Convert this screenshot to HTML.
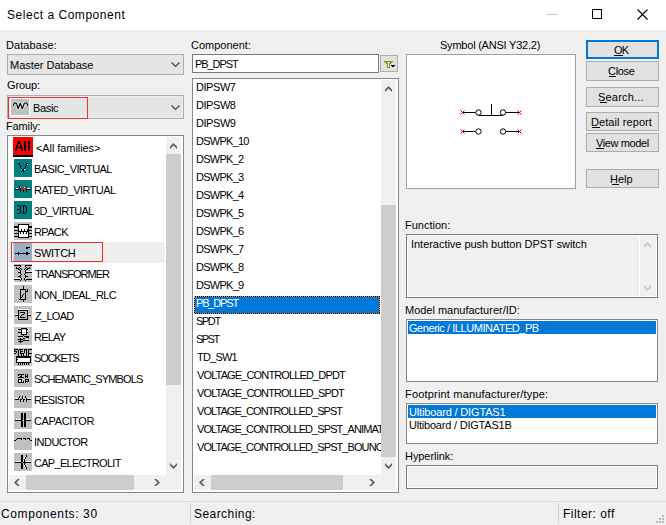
<!DOCTYPE html>
<html><head><meta charset="utf-8"><title>Select a Component</title><style>
html,body{margin:0;padding:0}
body{width:666px;height:525px;overflow:hidden;position:relative;background:#f0f0f0;font-family:"Liberation Sans",sans-serif;}
.a{position:absolute;box-sizing:border-box;}
.t{position:absolute;white-space:pre;font-size:11px;line-height:13px;color:#000;}
.s{font-size:12px;line-height:15px;}
svg{overflow:visible}
</style></head><body>
<div class="a" style="left:0px;top:0px;width:666px;height:30px;background:#fff"></div>
<div class="a" style="left:547px;top:14px;width:11px;height:1px;background:#c8c8c8"></div>
<div class="a" style="left:592px;top:9px;width:10px;height:10px;border:1px solid #000"></div>
<svg class="a" style="left:637px;top:9px;" width="12" height="12" viewBox="0 0 12 12"><path d="M0.5 0.5 L10.5 10.5 M10.5 0.5 L0.5 10.5" stroke="#000" stroke-width="1.1" fill="none"/></svg>
<div class="a" style="left:7px;top:54px;width:177px;height:21px;background:#e5e5e5;border:1px solid #adadad"></div>
<svg class="a" style="left:171px;top:62px;" width="9" height="6" viewBox="0 0 9 6"><path d="M0.5 0.5 L4.5 4.5 L8.5 0.5" stroke="#444" stroke-width="1.2" fill="none"/></svg>
<div class="a" style="left:7px;top:95px;width:177px;height:24px;background:#e5e5e5;border:1px solid #adadad"></div>
<div class="a" style="left:8px;top:96px;width:175px;height:22px;border:1px solid #e6f2f2"></div>
<div class="a" style="left:8px;top:97px;width:80px;height:22px;border:1px solid #f03030"></div>
<div class="a" style="left:10px;top:98px;width:20px;height:18px;background:#fff"></div>
<div class="a" style="left:11px;top:99px;width:18px;height:16px;background:#c0c0c0"></div>
<svg class="a" style="left:11px;top:99px;" width="18" height="16" viewBox="0 0 18 16"><path d="M2 6.8 Q3 3.6 4.5 3.8 Q5.6 3.9 6.1 6 L7.1 9.7 L9.2 4.2 L11.3 9.7 L13.2 4.6 Q14 3.6 15.2 3.8 Q16.4 4.1 17 6.8" stroke="#fff" stroke-width="2.4" fill="none" stroke-linejoin="round"/><path d="M2 6.8 Q3 3.6 4.5 3.8 Q5.6 3.9 6.1 6 L7.1 9.7 L9.2 4.2 L11.3 9.7 L13.2 4.6 Q14 3.6 15.2 3.8 Q16.4 4.1 17 6.8" stroke="#000" stroke-width="1.2" fill="none" stroke-linejoin="round"/></svg>
<svg class="a" style="left:171px;top:105px;" width="9" height="6" viewBox="0 0 9 6"><path d="M0.5 0.5 L4.5 4.5 L8.5 0.5" stroke="#444" stroke-width="1.2" fill="none"/></svg>
<div class="a" style="left:7px;top:135px;width:177px;height:358px;background:#fff;border:1px solid #828790"></div>
<div class="a" style="left:9px;top:242px;width:156px;height:21px;background:#efefef"></div>
<div class="a" style="left:11px;top:242px;width:92px;height:20px;border:1px solid #f03030"></div>
<div class="a" style="left:166px;top:137px;width:15px;height:353px;background:#f0f0f0"></div>
<div class="a" style="left:166px;top:154px;width:15px;height:231px;background:#cdcdcd"></div>
<svg class="a" style="left:170px;top:143px;" width="7" height="6" viewBox="0 0 7 6"><polygon points="0,6 0,3.6 3.5,0 7,3.6 7,6 3.5,2.5" fill="#606060"/></svg>
<svg class="a" style="left:170px;top:463px;" width="7" height="6" viewBox="0 0 7 6"><polygon points="0,0 0,2.4 3.5,6 7,2.4 7,0 3.5,3.5" fill="#606060"/></svg>
<div class="a" style="left:9px;top:475px;width:157px;height:15px;background:#f0f0f0"></div>
<div class="a" style="left:26px;top:475px;width:108px;height:15px;background:#cdcdcd"></div>
<svg class="a" style="left:14px;top:479px;" width="6" height="7" viewBox="0 0 6 7"><polygon points="6,0 3.6,0 0,3.5 3.6,7 6,7 2.5,3.5" fill="#606060"/></svg>
<svg class="a" style="left:154px;top:479px;" width="6" height="7" viewBox="0 0 6 7"><polygon points="0,0 2.4,0 6,3.5 2.4,7 0,7 3.5,3.5" fill="#606060"/></svg>
<svg class="a" style="left:13px;top:137px;shape-rendering:crispEdges" width="20" height="20" viewBox="0 0 20 20"><rect width="20" height="20" fill="#ff0000"/><rect x="5" y="4" width="2" height="1" fill="#000"/><rect x="11" y="4" width="2" height="1" fill="#000"/><rect x="15" y="4" width="2" height="1" fill="#000"/><rect x="5" y="5" width="2" height="1" fill="#000"/><rect x="11" y="5" width="2" height="1" fill="#000"/><rect x="15" y="5" width="2" height="1" fill="#000"/><rect x="4" y="6" width="4" height="1" fill="#000"/><rect x="11" y="6" width="2" height="1" fill="#000"/><rect x="15" y="6" width="2" height="1" fill="#000"/><rect x="4" y="7" width="1" height="1" fill="#000"/><rect x="7" y="7" width="1" height="1" fill="#000"/><rect x="11" y="7" width="2" height="1" fill="#000"/><rect x="15" y="7" width="2" height="1" fill="#000"/><rect x="3" y="8" width="2" height="1" fill="#000"/><rect x="7" y="8" width="2" height="1" fill="#000"/><rect x="11" y="8" width="2" height="1" fill="#000"/><rect x="15" y="8" width="2" height="1" fill="#000"/><rect x="3" y="9" width="2" height="1" fill="#000"/><rect x="7" y="9" width="2" height="1" fill="#000"/><rect x="11" y="9" width="2" height="1" fill="#000"/><rect x="15" y="9" width="2" height="1" fill="#000"/><rect x="3" y="10" width="6" height="1" fill="#000"/><rect x="11" y="10" width="2" height="1" fill="#000"/><rect x="15" y="10" width="2" height="1" fill="#000"/><rect x="2" y="11" width="2" height="1" fill="#000"/><rect x="8" y="11" width="2" height="1" fill="#000"/><rect x="11" y="11" width="2" height="1" fill="#000"/><rect x="15" y="11" width="2" height="1" fill="#000"/><rect x="2" y="12" width="2" height="1" fill="#000"/><rect x="8" y="12" width="2" height="1" fill="#000"/><rect x="11" y="12" width="2" height="1" fill="#000"/><rect x="15" y="12" width="2" height="1" fill="#000"/><rect x="2" y="13" width="2" height="1" fill="#000"/><rect x="8" y="13" width="2" height="1" fill="#000"/><rect x="11" y="13" width="2" height="1" fill="#000"/><rect x="15" y="13" width="2" height="1" fill="#000"/><rect x="0" y="18" width="20" height="1" fill="#000"/><rect x="0" y="19" width="20" height="1" fill="#000"/></svg>
<div class="a" style="left:13px;top:243px;width:1px;height:18px;background:#c4dcf2"></div>
<svg class="a" style="left:14px;top:159px;shape-rendering:crispEdges" width="18" height="18" viewBox="0 0 18 18"><rect width="18" height="18" fill="#008080"/><rect x="4" y="4" width="2" height="1" fill="#000"/><rect x="12" y="4" width="2" height="1" fill="#000"/><rect x="5" y="5" width="1" height="1" fill="#000"/><rect x="12" y="5" width="1" height="1" fill="#000"/><rect x="13" y="5" width="1" height="1" fill="#fff"/><rect x="6" y="6" width="1" height="1" fill="#000"/><rect x="12" y="6" width="1" height="1" fill="#000"/><rect x="6" y="7" width="1" height="1" fill="#000"/><rect x="11" y="7" width="1" height="1" fill="#000"/><rect x="6" y="8" width="1" height="1" fill="#000"/><rect x="11" y="8" width="1" height="1" fill="#000"/><rect x="7" y="9" width="1" height="1" fill="#000"/><rect x="10" y="9" width="1" height="1" fill="#000"/><rect x="7" y="10" width="1" height="1" fill="#fff"/><rect x="8" y="10" width="2" height="1" fill="#000"/><rect x="10" y="10" width="1" height="1" fill="#fff"/><rect x="8" y="11" width="2" height="1" fill="#000"/><rect x="9" y="12" width="1" height="1" fill="#000"/></svg>
<svg class="a" style="left:14px;top:180px;shape-rendering:crispEdges" width="18" height="18" viewBox="0 0 18 18"><rect width="18" height="18" fill="#008080"/><rect x="5" y="6" width="1" height="1" fill="#000"/><rect x="7" y="6" width="1" height="1" fill="#f00"/><rect x="11" y="6" width="1" height="1" fill="#f00"/><rect x="5" y="7" width="1" height="1" fill="#000"/><rect x="6" y="7" width="1" height="1" fill="#fff"/><rect x="7" y="7" width="1" height="1" fill="#f00"/><rect x="10" y="7" width="1" height="1" fill="#fff"/><rect x="11" y="7" width="1" height="1" fill="#f00"/><rect x="2" y="8" width="2" height="1" fill="#fff"/><rect x="6" y="8" width="1" height="1" fill="#000"/><rect x="7" y="8" width="4" height="1" fill="#f00"/><rect x="12" y="8" width="1" height="1" fill="#000"/><rect x="13" y="8" width="3" height="1" fill="#fff"/><rect x="1" y="9" width="4" height="1" fill="#000"/><rect x="6" y="9" width="1" height="1" fill="#000"/><rect x="8" y="9" width="2" height="1" fill="#f00"/><rect x="12" y="9" width="5" height="1" fill="#000"/><rect x="6" y="10" width="1" height="1" fill="#000"/><rect x="9" y="10" width="1" height="1" fill="#000"/><rect x="12" y="10" width="1" height="1" fill="#000"/><rect x="6" y="11" width="1" height="1" fill="#000"/><rect x="9" y="11" width="1" height="1" fill="#000"/><rect x="12" y="11" width="1" height="1" fill="#000"/></svg>
<svg class="a" style="left:14px;top:201px;shape-rendering:crispEdges" width="18" height="18" viewBox="0 0 18 18"><rect width="18" height="18" fill="#008080"/><rect x="3" y="4" width="3" height="1" fill="#000"/><rect x="8" y="4" width="3" height="1" fill="#000"/><rect x="6" y="5" width="1" height="1" fill="#000"/><rect x="9" y="5" width="1" height="1" fill="#000"/><rect x="11" y="5" width="1" height="1" fill="#000"/><rect x="6" y="6" width="1" height="1" fill="#000"/><rect x="9" y="6" width="1" height="1" fill="#000"/><rect x="12" y="6" width="1" height="1" fill="#000"/><rect x="6" y="7" width="1" height="1" fill="#000"/><rect x="9" y="7" width="1" height="1" fill="#000"/><rect x="12" y="7" width="1" height="1" fill="#000"/><rect x="3" y="8" width="3" height="1" fill="#000"/><rect x="9" y="8" width="1" height="1" fill="#000"/><rect x="12" y="8" width="1" height="1" fill="#000"/><rect x="6" y="9" width="1" height="1" fill="#000"/><rect x="9" y="9" width="1" height="1" fill="#000"/><rect x="12" y="9" width="1" height="1" fill="#000"/><rect x="6" y="10" width="1" height="1" fill="#000"/><rect x="9" y="10" width="1" height="1" fill="#000"/><rect x="12" y="10" width="1" height="1" fill="#000"/><rect x="6" y="11" width="1" height="1" fill="#000"/><rect x="9" y="11" width="1" height="1" fill="#000"/><rect x="11" y="11" width="1" height="1" fill="#000"/><rect x="3" y="12" width="3" height="1" fill="#000"/><rect x="8" y="12" width="3" height="1" fill="#000"/></svg>
<svg class="a" style="left:14px;top:222px;shape-rendering:crispEdges" width="18" height="18" viewBox="0 0 18 18"><rect width="18" height="18" fill="#c0c0c0"/><rect x="4" y="2" width="11" height="1" fill="#000"/><rect x="4" y="3" width="1" height="1" fill="#000"/><rect x="5" y="3" width="9" height="1" fill="#fff"/><rect x="14" y="3" width="1" height="1" fill="#000"/><rect x="0" y="4" width="5" height="1" fill="#000"/><rect x="5" y="4" width="9" height="1" fill="#fff"/><rect x="14" y="4" width="4" height="1" fill="#000"/><rect x="0" y="5" width="5" height="1" fill="#000"/><rect x="5" y="5" width="9" height="1" fill="#fff"/><rect x="14" y="5" width="4" height="1" fill="#000"/><rect x="4" y="6" width="1" height="1" fill="#000"/><rect x="5" y="6" width="9" height="1" fill="#fff"/><rect x="14" y="6" width="1" height="1" fill="#000"/><rect x="4" y="7" width="1" height="1" fill="#000"/><rect x="5" y="7" width="2" height="1" fill="#fff"/><rect x="7" y="7" width="1" height="1" fill="#000"/><rect x="8" y="7" width="2" height="1" fill="#fff"/><rect x="10" y="7" width="1" height="1" fill="#000"/><rect x="11" y="7" width="2" height="1" fill="#fff"/><rect x="13" y="7" width="2" height="1" fill="#000"/><rect x="0" y="8" width="5" height="1" fill="#000"/><rect x="5" y="8" width="2" height="1" fill="#fff"/><rect x="7" y="8" width="1" height="1" fill="#000"/><rect x="8" y="8" width="2" height="1" fill="#fff"/><rect x="10" y="8" width="1" height="1" fill="#000"/><rect x="11" y="8" width="2" height="1" fill="#fff"/><rect x="13" y="8" width="5" height="1" fill="#000"/><rect x="4" y="9" width="11" height="1" fill="#000"/><rect x="4" y="10" width="1" height="1" fill="#000"/><rect x="5" y="10" width="1" height="1" fill="#fff"/><rect x="6" y="10" width="1" height="1" fill="#000"/><rect x="7" y="10" width="2" height="1" fill="#fff"/><rect x="9" y="10" width="1" height="1" fill="#000"/><rect x="10" y="10" width="2" height="1" fill="#fff"/><rect x="12" y="10" width="1" height="1" fill="#000"/><rect x="13" y="10" width="1" height="1" fill="#fff"/><rect x="14" y="10" width="1" height="1" fill="#000"/><rect x="0" y="11" width="5" height="1" fill="#000"/><rect x="5" y="11" width="1" height="1" fill="#fff"/><rect x="6" y="11" width="1" height="1" fill="#000"/><rect x="7" y="11" width="2" height="1" fill="#fff"/><rect x="9" y="11" width="1" height="1" fill="#000"/><rect x="10" y="11" width="2" height="1" fill="#fff"/><rect x="12" y="11" width="1" height="1" fill="#000"/><rect x="13" y="11" width="1" height="1" fill="#fff"/><rect x="14" y="11" width="4" height="1" fill="#000"/><rect x="4" y="12" width="1" height="1" fill="#000"/><rect x="5" y="12" width="9" height="1" fill="#fff"/><rect x="14" y="12" width="1" height="1" fill="#000"/><rect x="4" y="13" width="1" height="1" fill="#000"/><rect x="5" y="13" width="9" height="1" fill="#fff"/><rect x="14" y="13" width="1" height="1" fill="#000"/><rect x="0" y="14" width="5" height="1" fill="#000"/><rect x="5" y="14" width="9" height="1" fill="#fff"/><rect x="14" y="14" width="4" height="1" fill="#000"/><rect x="4" y="15" width="11" height="1" fill="#000"/></svg>
<svg class="a" style="left:14px;top:243px;shape-rendering:crispEdges" width="18" height="18" viewBox="0 0 18 18"><rect width="18" height="18" fill="#98afc6"/><rect x="12" y="4" width="4" height="1" fill="#000"/><rect x="12" y="5" width="2" height="1" fill="#000"/><rect x="4" y="9" width="1" height="1" fill="#000"/><rect x="12" y="9" width="2" height="1" fill="#000"/><rect x="1" y="10" width="15" height="1" fill="#000"/><rect x="4" y="11" width="1" height="1" fill="#000"/><rect x="12" y="11" width="2" height="1" fill="#000"/></svg>
<svg class="a" style="left:14px;top:264px;shape-rendering:crispEdges" width="18" height="18" viewBox="0 0 18 18"><rect width="18" height="18" fill="#c0c0c0"/><rect x="0" y="1" width="7" height="1" fill="#000"/><rect x="11" y="1" width="7" height="1" fill="#000"/><rect x="6" y="2" width="1" height="1" fill="#000"/><rect x="8" y="2" width="2" height="1" fill="#fff"/><rect x="11" y="2" width="1" height="1" fill="#000"/><rect x="2" y="3" width="1" height="1" fill="#000"/><rect x="5" y="3" width="1" height="1" fill="#000"/><rect x="12" y="3" width="1" height="1" fill="#000"/><rect x="15" y="3" width="1" height="1" fill="#000"/><rect x="2" y="4" width="3" height="1" fill="#000"/><rect x="6" y="4" width="1" height="1" fill="#000"/><rect x="11" y="4" width="1" height="1" fill="#000"/><rect x="13" y="4" width="3" height="1" fill="#000"/><rect x="4" y="5" width="2" height="1" fill="#000"/><rect x="7" y="5" width="1" height="1" fill="#000"/><rect x="10" y="5" width="1" height="1" fill="#000"/><rect x="12" y="5" width="2" height="1" fill="#000"/><rect x="6" y="6" width="1" height="1" fill="#000"/><rect x="11" y="6" width="1" height="1" fill="#000"/><rect x="5" y="7" width="1" height="1" fill="#fff"/><rect x="6" y="7" width="1" height="1" fill="#000"/><rect x="11" y="7" width="1" height="1" fill="#000"/><rect x="12" y="7" width="6" height="1" fill="#fff"/><rect x="4" y="8" width="3" height="1" fill="#000"/><rect x="11" y="8" width="7" height="1" fill="#000"/><rect x="6" y="9" width="1" height="1" fill="#000"/><rect x="11" y="9" width="1" height="1" fill="#000"/><rect x="7" y="10" width="1" height="1" fill="#000"/><rect x="10" y="10" width="1" height="1" fill="#000"/><rect x="6" y="11" width="1" height="1" fill="#000"/><rect x="11" y="11" width="1" height="1" fill="#000"/><rect x="4" y="12" width="3" height="1" fill="#000"/><rect x="11" y="12" width="3" height="1" fill="#000"/><rect x="6" y="13" width="1" height="1" fill="#000"/><rect x="11" y="13" width="1" height="1" fill="#000"/><rect x="0" y="14" width="6" height="1" fill="#fff"/><rect x="7" y="14" width="1" height="1" fill="#000"/><rect x="10" y="14" width="1" height="1" fill="#000"/><rect x="0" y="15" width="6" height="1" fill="#000"/><rect x="7" y="15" width="1" height="1" fill="#000"/><rect x="10" y="15" width="1" height="1" fill="#000"/><rect x="12" y="15" width="6" height="1" fill="#000"/><rect x="6" y="16" width="1" height="1" fill="#000"/><rect x="11" y="16" width="1" height="1" fill="#000"/></svg>
<svg class="a" style="left:14px;top:285px;shape-rendering:crispEdges" width="18" height="18" viewBox="0 0 18 18"><rect width="18" height="18" fill="#c0c0c0"/><rect x="9" y="1" width="1" height="1" fill="#000"/><rect x="9" y="2" width="1" height="1" fill="#000"/><rect x="9" y="3" width="1" height="1" fill="#000"/><rect x="6" y="4" width="6" height="1" fill="#000"/><rect x="13" y="4" width="1" height="1" fill="#000"/><rect x="6" y="5" width="1" height="1" fill="#000"/><rect x="11" y="5" width="1" height="1" fill="#000"/><rect x="13" y="5" width="1" height="1" fill="#000"/><rect x="6" y="6" width="1" height="1" fill="#000"/><rect x="11" y="6" width="3" height="1" fill="#000"/><rect x="6" y="7" width="1" height="1" fill="#000"/><rect x="11" y="7" width="1" height="1" fill="#000"/><rect x="6" y="8" width="1" height="1" fill="#000"/><rect x="11" y="8" width="1" height="1" fill="#000"/><rect x="6" y="9" width="1" height="1" fill="#000"/><rect x="9" y="9" width="1" height="1" fill="#000"/><rect x="11" y="9" width="1" height="1" fill="#000"/><rect x="6" y="10" width="1" height="1" fill="#000"/><rect x="8" y="10" width="1" height="1" fill="#000"/><rect x="11" y="10" width="1" height="1" fill="#000"/><rect x="6" y="11" width="1" height="1" fill="#000"/><rect x="8" y="11" width="1" height="1" fill="#000"/><rect x="11" y="11" width="1" height="1" fill="#000"/><rect x="6" y="12" width="2" height="1" fill="#000"/><rect x="11" y="12" width="1" height="1" fill="#000"/><rect x="6" y="13" width="1" height="1" fill="#000"/><rect x="11" y="13" width="1" height="1" fill="#000"/><rect x="5" y="14" width="7" height="1" fill="#000"/><rect x="9" y="15" width="1" height="1" fill="#000"/><rect x="9" y="16" width="1" height="1" fill="#000"/></svg>
<svg class="a" style="left:14px;top:306px;shape-rendering:crispEdges" width="18" height="18" viewBox="0 0 18 18"><rect width="18" height="18" fill="#c0c0c0"/><rect x="4" y="3" width="10" height="1" fill="#fff"/><rect x="4" y="4" width="10" height="1" fill="#000"/><rect x="4" y="5" width="1" height="1" fill="#000"/><rect x="13" y="5" width="1" height="1" fill="#000"/><rect x="4" y="6" width="1" height="1" fill="#000"/><rect x="6" y="6" width="5" height="1" fill="#000"/><rect x="13" y="6" width="1" height="1" fill="#000"/><rect x="4" y="7" width="1" height="1" fill="#000"/><rect x="10" y="7" width="1" height="1" fill="#000"/><rect x="13" y="7" width="1" height="1" fill="#000"/><rect x="1" y="8" width="3" height="1" fill="#fff"/><rect x="4" y="8" width="1" height="1" fill="#000"/><rect x="8" y="8" width="2" height="1" fill="#000"/><rect x="13" y="8" width="1" height="1" fill="#000"/><rect x="14" y="8" width="3" height="1" fill="#fff"/><rect x="1" y="9" width="4" height="1" fill="#000"/><rect x="7" y="9" width="1" height="1" fill="#000"/><rect x="13" y="9" width="4" height="1" fill="#000"/><rect x="4" y="10" width="1" height="1" fill="#000"/><rect x="6" y="10" width="1" height="1" fill="#000"/><rect x="13" y="10" width="1" height="1" fill="#000"/><rect x="4" y="11" width="1" height="1" fill="#000"/><rect x="6" y="11" width="5" height="1" fill="#000"/><rect x="13" y="11" width="1" height="1" fill="#000"/><rect x="4" y="12" width="1" height="1" fill="#000"/><rect x="13" y="12" width="1" height="1" fill="#000"/><rect x="4" y="13" width="10" height="1" fill="#000"/></svg>
<svg class="a" style="left:14px;top:327px;shape-rendering:crispEdges" width="18" height="18" viewBox="0 0 18 18"><rect width="18" height="18" fill="#c0c0c0"/><rect x="7" y="1" width="6" height="1" fill="#000"/><rect x="3" y="2" width="1" height="1" fill="#fff"/><rect x="4" y="2" width="4" height="1" fill="#000"/><rect x="12" y="2" width="2" height="1" fill="#000"/><rect x="14" y="2" width="1" height="1" fill="#fff"/><rect x="7" y="3" width="1" height="1" fill="#000"/><rect x="8" y="3" width="4" height="1" fill="#fff"/><rect x="12" y="3" width="1" height="1" fill="#000"/><rect x="7" y="4" width="1" height="1" fill="#000"/><rect x="8" y="4" width="4" height="1" fill="#fff"/><rect x="12" y="4" width="1" height="1" fill="#000"/><rect x="13" y="4" width="1" height="1" fill="#fff"/><rect x="4" y="5" width="4" height="1" fill="#000"/><rect x="12" y="5" width="2" height="1" fill="#000"/><rect x="7" y="6" width="1" height="1" fill="#000"/><rect x="8" y="6" width="4" height="1" fill="#fff"/><rect x="12" y="6" width="1" height="1" fill="#000"/><rect x="7" y="7" width="6" height="1" fill="#000"/><rect x="9" y="8" width="1" height="1" fill="#000"/><rect x="4" y="9" width="5" height="1" fill="#000"/><rect x="10" y="9" width="5" height="1" fill="#000"/><rect x="12" y="10" width="3" height="1" fill="#000"/><rect x="6" y="11" width="1" height="1" fill="#000"/><rect x="9" y="11" width="2" height="1" fill="#000"/><rect x="4" y="12" width="5" height="1" fill="#000"/><rect x="12" y="12" width="1" height="1" fill="#fff"/><rect x="6" y="13" width="1" height="1" fill="#000"/><rect x="9" y="13" width="6" height="1" fill="#000"/><rect x="3" y="14" width="1" height="1" fill="#fff"/><rect x="4" y="14" width="5" height="1" fill="#000"/><rect x="6" y="15" width="1" height="1" fill="#000"/></svg>
<svg class="a" style="left:14px;top:348px;shape-rendering:crispEdges" width="18" height="18" viewBox="0 0 18 18"><rect width="18" height="18" fill="#c0c0c0"/><rect x="0" y="1" width="4" height="1" fill="#000"/><rect x="5" y="1" width="4" height="1" fill="#000"/><rect x="10" y="1" width="3" height="1" fill="#000"/><rect x="14" y="1" width="4" height="1" fill="#000"/><rect x="0" y="2" width="1" height="1" fill="#000"/><rect x="4" y="2" width="1" height="1" fill="#000"/><rect x="6" y="2" width="1" height="1" fill="#000"/><rect x="10" y="2" width="1" height="1" fill="#000"/><rect x="12" y="2" width="1" height="1" fill="#000"/><rect x="14" y="2" width="1" height="1" fill="#000"/><rect x="0" y="3" width="3" height="1" fill="#000"/><rect x="4" y="3" width="1" height="1" fill="#000"/><rect x="6" y="3" width="3" height="1" fill="#000"/><rect x="10" y="3" width="1" height="1" fill="#000"/><rect x="12" y="3" width="1" height="1" fill="#000"/><rect x="14" y="3" width="1" height="1" fill="#000"/><rect x="2" y="4" width="1" height="1" fill="#000"/><rect x="4" y="4" width="1" height="1" fill="#000"/><rect x="6" y="4" width="1" height="1" fill="#000"/><rect x="10" y="4" width="1" height="1" fill="#000"/><rect x="12" y="4" width="1" height="1" fill="#000"/><rect x="14" y="4" width="1" height="1" fill="#000"/><rect x="0" y="5" width="2" height="1" fill="#000"/><rect x="4" y="5" width="1" height="1" fill="#000"/><rect x="6" y="5" width="4" height="1" fill="#000"/><rect x="12" y="5" width="1" height="1" fill="#000"/><rect x="14" y="5" width="4" height="1" fill="#000"/><rect x="4" y="6" width="1" height="1" fill="#000"/><rect x="7" y="6" width="1" height="1" fill="#000"/><rect x="9" y="6" width="1" height="1" fill="#000"/><rect x="12" y="6" width="1" height="1" fill="#000"/><rect x="14" y="6" width="1" height="1" fill="#000"/><rect x="4" y="7" width="1" height="1" fill="#000"/><rect x="7" y="7" width="1" height="1" fill="#000"/><rect x="9" y="7" width="1" height="1" fill="#000"/><rect x="12" y="7" width="1" height="1" fill="#000"/><rect x="14" y="7" width="1" height="1" fill="#000"/><rect x="2" y="8" width="15" height="1" fill="#000"/><rect x="2" y="9" width="15" height="1" fill="#000"/><rect x="2" y="10" width="1" height="1" fill="#000"/><rect x="3" y="10" width="13" height="1" fill="#fff"/><rect x="16" y="10" width="1" height="1" fill="#000"/><rect x="2" y="11" width="2" height="1" fill="#000"/><rect x="4" y="11" width="12" height="1" fill="#fff"/><rect x="16" y="11" width="1" height="1" fill="#000"/><rect x="2" y="12" width="1" height="1" fill="#000"/><rect x="3" y="12" width="13" height="1" fill="#fff"/><rect x="16" y="12" width="1" height="1" fill="#000"/><rect x="2" y="13" width="1" height="1" fill="#000"/><rect x="3" y="13" width="13" height="1" fill="#fff"/><rect x="16" y="13" width="1" height="1" fill="#000"/><rect x="2" y="14" width="15" height="1" fill="#000"/><rect x="4" y="15" width="1" height="1" fill="#000"/><rect x="6" y="15" width="1" height="1" fill="#000"/><rect x="8" y="15" width="1" height="1" fill="#000"/><rect x="10" y="15" width="1" height="1" fill="#000"/><rect x="12" y="15" width="1" height="1" fill="#000"/><rect x="14" y="15" width="1" height="1" fill="#000"/><rect x="4" y="16" width="1" height="1" fill="#000"/><rect x="6" y="16" width="1" height="1" fill="#000"/><rect x="8" y="16" width="1" height="1" fill="#000"/><rect x="10" y="16" width="1" height="1" fill="#000"/><rect x="12" y="16" width="1" height="1" fill="#000"/><rect x="14" y="16" width="1" height="1" fill="#000"/></svg>
<svg class="a" style="left:14px;top:369px;shape-rendering:crispEdges" width="18" height="18" viewBox="0 0 18 18"><rect width="18" height="18" fill="#c0c0c0"/><rect x="4" y="5" width="6" height="1" fill="#000"/><rect x="11" y="5" width="1" height="1" fill="#000"/><rect x="13" y="5" width="1" height="1" fill="#000"/><rect x="4" y="6" width="1" height="1" fill="#000"/><rect x="7" y="6" width="1" height="1" fill="#000"/><rect x="11" y="6" width="1" height="1" fill="#000"/><rect x="13" y="6" width="1" height="1" fill="#000"/><rect x="6" y="7" width="2" height="1" fill="#000"/><rect x="11" y="7" width="3" height="1" fill="#000"/><rect x="4" y="8" width="6" height="1" fill="#000"/><rect x="11" y="8" width="1" height="1" fill="#000"/><rect x="13" y="8" width="1" height="1" fill="#000"/><rect x="4" y="10" width="4" height="1" fill="#000"/><rect x="11" y="10" width="4" height="1" fill="#000"/><rect x="4" y="11" width="1" height="1" fill="#000"/><rect x="5" y="11" width="2" height="1" fill="#fff"/><rect x="7" y="11" width="1" height="1" fill="#000"/><rect x="11" y="11" width="1" height="1" fill="#000"/><rect x="14" y="11" width="1" height="1" fill="#000"/><rect x="4" y="12" width="1" height="1" fill="#000"/><rect x="5" y="12" width="2" height="1" fill="#fff"/><rect x="7" y="12" width="1" height="1" fill="#000"/><rect x="8" y="12" width="1" height="1" fill="#fff"/><rect x="9" y="12" width="1" height="1" fill="#000"/><rect x="11" y="12" width="4" height="1" fill="#000"/><rect x="4" y="13" width="6" height="1" fill="#000"/><rect x="11" y="13" width="1" height="1" fill="#000"/></svg>
<svg class="a" style="left:14px;top:390px;shape-rendering:crispEdges" width="18" height="18" viewBox="0 0 18 18"><rect width="18" height="18" fill="#c0c0c0"/><rect x="5" y="6" width="1" height="1" fill="#000"/><rect x="8" y="6" width="1" height="1" fill="#000"/><rect x="11" y="6" width="1" height="1" fill="#000"/><rect x="5" y="7" width="1" height="1" fill="#000"/><rect x="6" y="7" width="1" height="1" fill="#fff"/><rect x="8" y="7" width="1" height="1" fill="#000"/><rect x="9" y="7" width="1" height="1" fill="#fff"/><rect x="11" y="7" width="1" height="1" fill="#000"/><rect x="1" y="8" width="3" height="1" fill="#fff"/><rect x="4" y="8" width="1" height="1" fill="#000"/><rect x="8" y="8" width="1" height="1" fill="#000"/><rect x="12" y="8" width="1" height="1" fill="#000"/><rect x="13" y="8" width="4" height="1" fill="#fff"/><rect x="1" y="9" width="4" height="1" fill="#000"/><rect x="6" y="9" width="2" height="1" fill="#000"/><rect x="9" y="9" width="2" height="1" fill="#000"/><rect x="12" y="9" width="5" height="1" fill="#000"/><rect x="6" y="10" width="1" height="1" fill="#000"/><rect x="9" y="10" width="1" height="1" fill="#000"/><rect x="12" y="10" width="1" height="1" fill="#000"/><rect x="6" y="11" width="1" height="1" fill="#000"/><rect x="9" y="11" width="1" height="1" fill="#000"/><rect x="12" y="11" width="1" height="1" fill="#000"/></svg>
<svg class="a" style="left:14px;top:411px;shape-rendering:crispEdges" width="18" height="18" viewBox="0 0 18 18"><rect width="18" height="18" fill="#c0c0c0"/><rect x="7" y="2" width="2" height="1" fill="#000"/><rect x="10" y="2" width="2" height="1" fill="#000"/><rect x="7" y="3" width="2" height="1" fill="#000"/><rect x="10" y="3" width="2" height="1" fill="#000"/><rect x="7" y="4" width="2" height="1" fill="#000"/><rect x="10" y="4" width="2" height="1" fill="#000"/><rect x="7" y="5" width="2" height="1" fill="#000"/><rect x="10" y="5" width="2" height="1" fill="#000"/><rect x="7" y="6" width="2" height="1" fill="#000"/><rect x="10" y="6" width="2" height="1" fill="#000"/><rect x="7" y="7" width="2" height="1" fill="#000"/><rect x="10" y="7" width="2" height="1" fill="#000"/><rect x="2" y="8" width="4" height="1" fill="#fff"/><rect x="7" y="8" width="2" height="1" fill="#000"/><rect x="10" y="8" width="2" height="1" fill="#000"/><rect x="12" y="8" width="4" height="1" fill="#fff"/><rect x="1" y="9" width="7" height="1" fill="#000"/><rect x="10" y="9" width="7" height="1" fill="#000"/><rect x="7" y="10" width="2" height="1" fill="#000"/><rect x="10" y="10" width="2" height="1" fill="#000"/><rect x="7" y="11" width="2" height="1" fill="#000"/><rect x="10" y="11" width="2" height="1" fill="#000"/><rect x="7" y="12" width="2" height="1" fill="#000"/><rect x="10" y="12" width="2" height="1" fill="#000"/><rect x="7" y="13" width="2" height="1" fill="#000"/><rect x="10" y="13" width="2" height="1" fill="#000"/><rect x="7" y="14" width="2" height="1" fill="#000"/><rect x="10" y="14" width="2" height="1" fill="#000"/><rect x="7" y="15" width="2" height="1" fill="#000"/><rect x="10" y="15" width="2" height="1" fill="#000"/></svg>
<svg class="a" style="left:14px;top:432px;shape-rendering:crispEdges" width="18" height="18" viewBox="0 0 18 18"><rect width="18" height="18" fill="#c0c0c0"/><rect x="3" y="6" width="5" height="1" fill="#000"/><rect x="9" y="6" width="3" height="1" fill="#000"/><rect x="13" y="6" width="3" height="1" fill="#000"/><rect x="2" y="7" width="1" height="1" fill="#000"/><rect x="7" y="7" width="1" height="1" fill="#000"/><rect x="11" y="7" width="1" height="1" fill="#000"/><rect x="15" y="7" width="1" height="1" fill="#000"/><rect x="0" y="8" width="2" height="1" fill="#000"/><rect x="16" y="8" width="2" height="1" fill="#000"/></svg>
<svg class="a" style="left:14px;top:453px;shape-rendering:crispEdges" width="18" height="18" viewBox="0 0 18 18"><rect width="18" height="18" fill="#c0c0c0"/><rect x="7" y="2" width="2" height="1" fill="#000"/><rect x="12" y="2" width="1" height="1" fill="#000"/><rect x="7" y="3" width="2" height="1" fill="#000"/><rect x="11" y="3" width="1" height="1" fill="#fff"/><rect x="12" y="3" width="1" height="1" fill="#000"/><rect x="7" y="4" width="2" height="1" fill="#000"/><rect x="10" y="4" width="1" height="1" fill="#fff"/><rect x="11" y="4" width="1" height="1" fill="#000"/><rect x="7" y="5" width="2" height="1" fill="#000"/><rect x="10" y="5" width="1" height="1" fill="#fff"/><rect x="11" y="5" width="1" height="1" fill="#000"/><rect x="7" y="6" width="2" height="1" fill="#000"/><rect x="10" y="6" width="1" height="1" fill="#000"/><rect x="11" y="6" width="1" height="1" fill="#fff"/><rect x="7" y="7" width="2" height="1" fill="#000"/><rect x="9" y="7" width="1" height="1" fill="#fff"/><rect x="10" y="7" width="1" height="1" fill="#000"/><rect x="2" y="8" width="5" height="1" fill="#fff"/><rect x="7" y="8" width="2" height="1" fill="#000"/><rect x="10" y="8" width="1" height="1" fill="#000"/><rect x="12" y="8" width="5" height="1" fill="#fff"/><rect x="1" y="9" width="7" height="1" fill="#000"/><rect x="9" y="9" width="8" height="1" fill="#000"/><rect x="7" y="10" width="2" height="1" fill="#000"/><rect x="10" y="10" width="1" height="1" fill="#000"/><rect x="7" y="11" width="2" height="1" fill="#000"/><rect x="10" y="11" width="1" height="1" fill="#000"/><rect x="7" y="12" width="2" height="1" fill="#000"/><rect x="10" y="12" width="1" height="1" fill="#fff"/><rect x="11" y="12" width="1" height="1" fill="#000"/><rect x="7" y="13" width="2" height="1" fill="#000"/><rect x="10" y="13" width="1" height="1" fill="#fff"/><rect x="11" y="13" width="1" height="1" fill="#000"/><rect x="7" y="14" width="2" height="1" fill="#000"/><rect x="11" y="14" width="1" height="1" fill="#fff"/><rect x="12" y="14" width="1" height="1" fill="#000"/><rect x="7" y="15" width="2" height="1" fill="#000"/><rect x="12" y="15" width="1" height="1" fill="#000"/></svg>
<div class="a" style="left:192px;top:54px;width:187px;height:19px;background:#fff;border:1px solid #7a7a7a"></div>
<div class="a" style="left:380px;top:55px;width:18px;height:17px;background:#e1e1e1;border:1px solid #adadad"></div>
<svg class="a" style="left:381px;top:56px;shape-rendering:crispEdges" width="16" height="15"><rect x="3" y="5" width="9" height="1" fill="#8a8a00"/><rect x="4" y="6" width="2" height="1" fill="#8a8a00"/><rect x="6" y="6" width="3" height="1" fill="#fff"/><rect x="9" y="6" width="2" height="1" fill="#8a8a00"/><rect x="5" y="7" width="2" height="1" fill="#8a8a00"/><rect x="7" y="7" width="1" height="1" fill="#fff"/><rect x="8" y="7" width="2" height="1" fill="#8a8a00"/><rect x="6" y="8" width="1" height="1" fill="#8a8a00"/><rect x="7" y="8" width="1" height="1" fill="#fff"/><rect x="8" y="8" width="1" height="1" fill="#8a8a00"/><rect x="6" y="9" width="1" height="1" fill="#8a8a00"/><rect x="7" y="9" width="1" height="1" fill="#fff"/><rect x="8" y="9" width="1" height="1" fill="#8a8a00"/><rect x="10" y="9" width="4" height="1" fill="#000"/><rect x="6" y="10" width="1" height="1" fill="#8a8a00"/><rect x="7" y="10" width="1" height="1" fill="#fff"/><rect x="8" y="10" width="1" height="1" fill="#8a8a00"/><rect x="11" y="10" width="2" height="1" fill="#000"/><rect x="6" y="11" width="3" height="1" fill="#8a8a00"/></svg>
<div class="a" style="left:192px;top:78px;width:207px;height:415px;background:#fff;border:1px solid #828790"></div>
<div class="a" style="left:381px;top:80px;width:15px;height:410px;background:#f0f0f0"></div>
<div class="a" style="left:381px;top:205px;width:15px;height:252px;background:#cdcdcd"></div>
<svg class="a" style="left:385px;top:86px;" width="7" height="6" viewBox="0 0 7 6"><polygon points="0,6 0,3.6 3.5,0 7,3.6 7,6 3.5,2.5" fill="#606060"/></svg>
<svg class="a" style="left:385px;top:463px;" width="7" height="6" viewBox="0 0 7 6"><polygon points="0,0 0,2.4 3.5,6 7,2.4 7,0 3.5,3.5" fill="#606060"/></svg>
<div class="a" style="left:194px;top:475px;width:187px;height:15px;background:#f0f0f0"></div>
<div class="a" style="left:211px;top:475px;width:132px;height:15px;background:#cdcdcd"></div>
<svg class="a" style="left:199px;top:479px;" width="6" height="7" viewBox="0 0 6 7"><polygon points="6,0 3.6,0 0,3.5 3.6,7 6,7 2.5,3.5" fill="#606060"/></svg>
<svg class="a" style="left:369px;top:479px;" width="6" height="7" viewBox="0 0 6 7"><polygon points="0,0 2.4,0 6,3.5 2.4,7 0,7 3.5,3.5" fill="#606060"/></svg>
<div class="a" style="left:194px;top:296px;width:186px;height:18px;background:#0078d7"></div>
<svg class="a" style="left:194px;top:296px;shape-rendering:crispEdges" width="186" height="18" viewBox="0 0 186 18"><rect x="0.5" y="0.5" width="185" height="17" fill="none" stroke="#ff8728" stroke-width="1"/><rect x="0.5" y="0.5" width="185" height="17" fill="none" stroke="#000" stroke-width="1" stroke-dasharray="1 1"/></svg>
<div class="a" style="left:406px;top:54px;width:170px;height:135px;background:#fff;border:1px solid #a0a0a0"></div>
<svg class="a" style="left:0;top:0" width="666" height="525"><g stroke="#000" stroke-width="1" fill="none" shape-rendering="geometricPrecision">
<path d="M463 112.5 H475.5 M506 112.5 H519 M478.5 115.5 H502.5 M491.5 104 V115.5 M463 131.5 H475.5 M506 131.5 H519"/>
<circle cx="478.5" cy="112.5" r="2.7" fill="#fff"/><circle cx="503" cy="112.5" r="2.7" fill="#fff"/>
<circle cx="478.5" cy="131.5" r="2.7" fill="#fff"/><circle cx="503" cy="131.5" r="2.7" fill="#fff"/>
</g><g stroke="#e00000" stroke-width="1" fill="none">
<path d="M460.5 110.5 L464.5 114.5 M464.5 110.5 L460.5 114.5 M517.5 110.5 L521.5 114.5 M521.5 110.5 L517.5 114.5 M460.5 129.5 L464.5 133.5 M464.5 129.5 L460.5 133.5 M517.5 129.5 L521.5 133.5 M521.5 129.5 L517.5 133.5"/></g></svg>
<div class="a" style="left:586px;top:40px;width:73px;height:19px;background:#e1e1e1;border:2px solid #0078d7"></div>
<div class="a" style="left:586px;top:61px;width:73px;height:20px;background:#e1e1e1;border:1px solid #adadad"></div>
<div class="a" style="left:586px;top:87px;width:73px;height:20px;background:#e1e1e1;border:1px solid #adadad"></div>
<div class="a" style="left:586px;top:112px;width:73px;height:19px;background:#e1e1e1;border:1px solid #adadad"></div>
<div class="a" style="left:586px;top:133px;width:73px;height:19px;background:#e1e1e1;border:1px solid #adadad"></div>
<div class="a" style="left:586px;top:169px;width:73px;height:19px;background:#e1e1e1;border:1px solid #adadad"></div>
<div class="a" style="left:614px;top:55px;width:9px;height:1px;background:#000"></div>
<div class="a" style="left:609px;top:76px;width:7px;height:1px;background:#000"></div>
<div class="a" style="left:600px;top:102px;width:7px;height:1px;background:#000"></div>
<div class="a" style="left:592px;top:127px;width:8px;height:1px;background:#000"></div>
<div class="a" style="left:596px;top:148px;width:8px;height:1px;background:#000"></div>
<div class="a" style="left:612px;top:184px;width:7px;height:1px;background:#000"></div>
<div class="a" style="left:406px;top:234px;width:252px;height:64px;background:#f0f0f0;border:1px solid #7a7a7a"></div>
<div class="a" style="left:407px;top:235px;width:250px;height:62px;border:1px solid #fff"></div>
<div class="a" style="left:639px;top:235px;width:1px;height:62px;background:#fff"></div>
<svg class="a" style="left:644px;top:242px;" width="7" height="6" viewBox="0 0 7 6"><polygon points="0,6 0,3.6 3.5,0 7,3.6 7,6 3.5,2.5" fill="#c8c8c8"/></svg>
<svg class="a" style="left:644px;top:285px;" width="7" height="6" viewBox="0 0 7 6"><polygon points="0,0 0,2.4 3.5,6 7,2.4 7,0 3.5,3.5" fill="#c8c8c8"/></svg>
<div class="a" style="left:406px;top:319px;width:252px;height:63px;background:#fff;border:1px solid #828790"></div>
<div class="a" style="left:408px;top:321px;width:248px;height:13px;background:#0078d7"></div>
<div class="a" style="left:406px;top:403px;width:252px;height:41px;background:#fff;border:1px solid #828790"></div>
<div class="a" style="left:408px;top:405px;width:248px;height:13px;background:#0078d7"></div>
<div class="a" style="left:406px;top:465px;width:252px;height:24px;background:#f0f0f0;border:1px solid #7a7a7a"></div>
<div class="a" style="left:407px;top:466px;width:250px;height:22px;border:1px solid #fff"></div>
<div class="a" style="left:0px;top:501px;width:666px;height:1px;background:#dadada"></div>
<div class="a" style="left:190px;top:503px;width:1px;height:21px;background:#d0d0d0"></div>
<div class="a" style="left:558px;top:503px;width:1px;height:21px;background:#d0d0d0"></div>
<div class="a" style="left:662px;top:521px;width:2px;height:2px;background:#b8b8b8"></div>
<div class="a" style="left:659px;top:521px;width:2px;height:2px;background:#b8b8b8"></div>
<div class="a" style="left:656px;top:521px;width:2px;height:2px;background:#b8b8b8"></div>
<div class="a" style="left:662px;top:518px;width:2px;height:2px;background:#b8b8b8"></div>
<div class="a" style="left:659px;top:518px;width:2px;height:2px;background:#b8b8b8"></div>
<div class="a" style="left:662px;top:515px;width:2px;height:2px;background:#b8b8b8"></div>
<div class="t s" style="left:7px;top:8px;letter-spacing:0.529px">Select a Component</div>
<div class="t" style="left:6px;top:39px;letter-spacing:0.075px">Database:</div>
<div class="t" style="left:10px;top:59px;letter-spacing:-0.029px">Master Database</div>
<div class="t" style="left:7px;top:79px;letter-spacing:-0.120px">Group:</div>
<div class="t" style="left:33px;top:102px;letter-spacing:-0.350px">Basic</div>
<div class="t" style="left:6px;top:120px;letter-spacing:-0.133px">Family:</div>
<div class="t" style="left:191px;top:39px;letter-spacing:0.000px">Component:</div>
<div class="t" style="left:195px;top:58px;letter-spacing:-1.067px">PB_DPST</div>
<div class="t" style="left:440px;top:39px;letter-spacing:-0.222px">Symbol (ANSI Y32.2)</div>
<div class="t" style="left:614px;top:44px;letter-spacing:-0.800px">OK</div>
<div class="t" style="left:608px;top:65px;letter-spacing:-0.300px">Close</div>
<div class="t" style="left:598px;top:91px;letter-spacing:0.200px">Search...</div>
<div class="t" style="left:591px;top:116px;letter-spacing:0.083px">Detail report</div>
<div class="t" style="left:596px;top:137px;letter-spacing:-0.378px">View model</div>
<div class="t" style="left:610px;top:173px;letter-spacing:0.000px">Help</div>
<div class="t" style="left:405px;top:219px;letter-spacing:0.000px">Function:</div>
<div class="t" style="left:411px;top:238px;letter-spacing:-0.035px">Interactive push button DPST switch</div>
<div class="t" style="left:405px;top:304px;letter-spacing:-0.010px">Model manufacturer/ID:</div>
<div class="t" style="left:409px;top:322px;letter-spacing:-0.443px;color:#fff">Generic / ILLUMINATED_PB</div>
<div class="t" style="left:405px;top:388px;letter-spacing:0.185px">Footprint manufacturer/type:</div>
<div class="t" style="left:409px;top:406px;letter-spacing:-0.156px;color:#fff">Ultiboard / DIGTAS1</div>
<div class="t" style="left:409px;top:419px;letter-spacing:-0.211px">Ultiboard / DIGTAS1B</div>
<div class="t" style="left:405px;top:450px;letter-spacing:-0.067px">Hyperlink:</div>
<div class="t s" style="left:1px;top:507px;letter-spacing:0.615px">Components: 30</div>
<div class="t s" style="left:194px;top:507px;letter-spacing:0.444px">Searching:</div>
<div class="t s" style="left:563px;top:507px;letter-spacing:0.480px">Filter: off</div>
<div class="t" style="left:36px;top:142px;letter-spacing:-0.077px">&lt;All families&gt;</div>
<div class="t" style="left:34px;top:163px;letter-spacing:-0.583px">BASIC_VIRTUAL</div>
<div class="t" style="left:34px;top:184px;letter-spacing:-0.567px">RATED_VIRTUAL</div>
<div class="t" style="left:34px;top:205px;letter-spacing:-0.689px">3D_VIRTUAL</div>
<div class="t" style="left:34px;top:226px;letter-spacing:-0.650px">RPACK</div>
<div class="t" style="left:34px;top:247px;letter-spacing:-0.320px">SWITCH</div>
<div class="t" style="left:35px;top:268px;letter-spacing:-1.000px">TRANSFORMER</div>
<div class="t" style="left:34px;top:289px;letter-spacing:-0.650px">NON_IDEAL_RLC</div>
<div class="t" style="left:35px;top:310px;letter-spacing:-0.720px">Z_LOAD</div>
<div class="t" style="left:34px;top:331px;letter-spacing:-0.800px">RELAY</div>
<div class="t" style="left:34px;top:352px;letter-spacing:-1.167px">SOCKETS</div>
<div class="t" style="left:34px;top:373px;letter-spacing:-0.875px">SCHEMATIC_SYMBOLS</div>
<div class="t" style="left:34px;top:394px;letter-spacing:-0.743px">RESISTOR</div>
<div class="t" style="left:34px;top:415px;letter-spacing:-0.350px">CAPACITOR</div>
<div class="t" style="left:34px;top:436px;letter-spacing:-0.514px">INDUCTOR</div>
<div class="t" style="left:34px;top:457px;letter-spacing:-0.708px">CAP_ELECTROLIT</div>
<div class="a" style="left:194px;top:81px;width:187px;height:13px;overflow:hidden"><div class="t" style="left:2px;top:0;letter-spacing:-0.440px;color:#000">DIPSW7</div></div>
<div class="a" style="left:194px;top:99px;width:187px;height:13px;overflow:hidden"><div class="t" style="left:2px;top:0;letter-spacing:-0.440px;color:#000">DIPSW8</div></div>
<div class="a" style="left:194px;top:117px;width:187px;height:13px;overflow:hidden"><div class="t" style="left:2px;top:0;letter-spacing:-0.440px;color:#000">DIPSW9</div></div>
<div class="a" style="left:194px;top:135px;width:187px;height:13px;overflow:hidden"><div class="t" style="left:2px;top:0;letter-spacing:-0.743px;color:#000">DSWPK_10</div></div>
<div class="a" style="left:194px;top:153px;width:187px;height:13px;overflow:hidden"><div class="t" style="left:2px;top:0;letter-spacing:-0.733px;color:#000">DSWPK_2</div></div>
<div class="a" style="left:194px;top:171px;width:187px;height:13px;overflow:hidden"><div class="t" style="left:2px;top:0;letter-spacing:-0.733px;color:#000">DSWPK_3</div></div>
<div class="a" style="left:194px;top:189px;width:187px;height:13px;overflow:hidden"><div class="t" style="left:2px;top:0;letter-spacing:-0.733px;color:#000">DSWPK_4</div></div>
<div class="a" style="left:194px;top:207px;width:187px;height:13px;overflow:hidden"><div class="t" style="left:2px;top:0;letter-spacing:-0.733px;color:#000">DSWPK_5</div></div>
<div class="a" style="left:194px;top:225px;width:187px;height:13px;overflow:hidden"><div class="t" style="left:2px;top:0;letter-spacing:-0.733px;color:#000">DSWPK_6</div></div>
<div class="a" style="left:194px;top:243px;width:187px;height:13px;overflow:hidden"><div class="t" style="left:2px;top:0;letter-spacing:-0.733px;color:#000">DSWPK_7</div></div>
<div class="a" style="left:194px;top:261px;width:187px;height:13px;overflow:hidden"><div class="t" style="left:2px;top:0;letter-spacing:-0.733px;color:#000">DSWPK_8</div></div>
<div class="a" style="left:194px;top:279px;width:187px;height:13px;overflow:hidden"><div class="t" style="left:2px;top:0;letter-spacing:-0.733px;color:#000">DSWPK_9</div></div>
<div class="a" style="left:194px;top:297px;width:187px;height:13px;overflow:hidden"><div class="t" style="left:2px;top:0;letter-spacing:-1.167px;color:#fff">PB_DPST</div></div>
<div class="a" style="left:194px;top:315px;width:187px;height:13px;overflow:hidden"><div class="t" style="left:2px;top:0;letter-spacing:-1.400px;color:#000">SPDT</div></div>
<div class="a" style="left:194px;top:333px;width:187px;height:13px;overflow:hidden"><div class="t" style="left:2px;top:0;letter-spacing:-1.533px;color:#000">SPST</div></div>
<div class="a" style="left:194px;top:351px;width:187px;height:13px;overflow:hidden"><div class="t" style="left:3px;top:0;letter-spacing:-0.800px;color:#000">TD_SW1</div></div>
<div class="a" style="left:194px;top:369px;width:187px;height:13px;overflow:hidden"><div class="t" style="left:3px;top:0;letter-spacing:-0.864px;color:#000">VOLTAGE_CONTROLLED_DPDT</div></div>
<div class="a" style="left:194px;top:387px;width:187px;height:13px;overflow:hidden"><div class="t" style="left:3px;top:0;letter-spacing:-0.882px;color:#000">VOLTAGE_CONTROLLED_SPDT</div></div>
<div class="a" style="left:194px;top:405px;width:187px;height:13px;overflow:hidden"><div class="t" style="left:3px;top:0;letter-spacing:-0.927px;color:#000">VOLTAGE_CONTROLLED_SPST</div></div>
<div class="a" style="left:194px;top:423px;width:187px;height:13px;overflow:hidden"><div class="t" style="left:3px;top:0;letter-spacing:-0.918px;color:#000">VOLTAGE_CONTROLLED_SPST_ANIMATED</div></div>
<div class="a" style="left:194px;top:441px;width:187px;height:13px;overflow:hidden"><div class="t" style="left:3px;top:0;letter-spacing:-0.918px;color:#000">VOLTAGE_CONTROLLED_SPST_BOUNCE</div></div>
</body></html>
